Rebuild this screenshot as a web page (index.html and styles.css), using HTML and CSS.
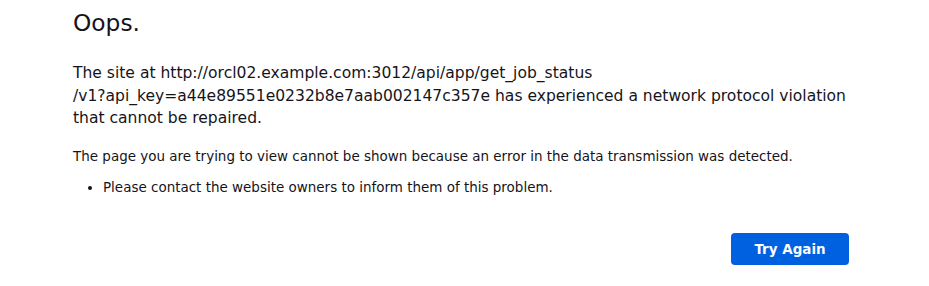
FILE: index.html
```html
<!DOCTYPE html>
<html lang="en">
<head>
<meta charset="utf-8">
<title>Problem loading page</title>
<link rel="stylesheet" href="styles.css">
</head>
<body>
<main class="container">
  <h1 class="title">Oops.</h1>
  <p class="intro">The site at <span class="nb">http://orcl02.example.com:3012/api/app/get_job_status</span><wbr><span class="nb">/v1?api_key=a44e89551e0232b8e7aab002147c357e</span> has experienced a network protocol violation that cannot be repaired.</p>
  <p class="desc">The page you are trying to view cannot be shown because an error in the data transmission was detected.</p>
  <ul class="list">
    <li>Please contact the website owners to inform them of this problem.</li>
  </ul>
  <div class="actions">
    <button class="primary">Try Again</button>
  </div>
</main>
</body>
</html>
```
FILE: styles.css
```css
html, body {
  margin: 0;
  padding: 0;
  background: #ffffff;
}
body {
  font-family: "DejaVu Sans", sans-serif;
  color: #15141a;
}
.container {
  width: 776px;
  margin-left: 73px;
  padding-top: 6px;
}
.title {
  font-size: 23.3px;
  font-weight: normal;
  margin: 0;
  line-height: 34px;
}
.intro {
  font-size: 15.55px;
  line-height: 22.5px;
  margin: 22px 0 0 0;
}
.nb {
  white-space: nowrap;
}
.desc {
  font-size: 13.47px;
  line-height: 20px;
  margin: 16px 0 0 0;
}
.list {
  font-size: 13.47px;
  line-height: 20px;
  margin: 11px 0 0 0;
  padding-left: 30px;
}
.actions {
  display: flex;
  justify-content: flex-end;
  margin-top: 36px;
}
.primary {
  background: #0061e0;
  color: #fbfbfe;
  border: none;
  border-radius: 4px;
  font-family: "DejaVu Sans", sans-serif;
  font-weight: bold;
  font-size: 13.47px;
  width: 118px;
  height: 32px;
  padding: 0;
}
```
